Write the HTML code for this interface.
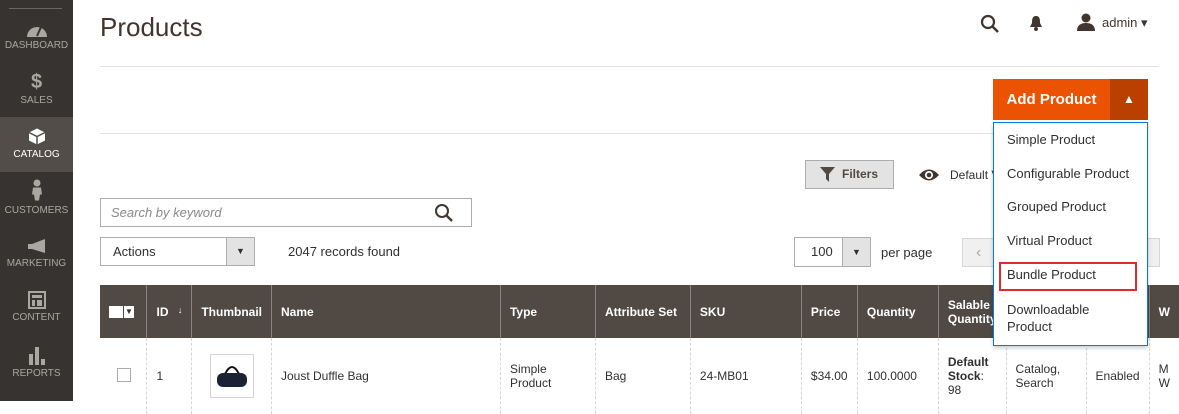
<!DOCTYPE html>
<html><head><style>
*{box-sizing:border-box;margin:0;padding:0}
body{width:1179px;height:401px;overflow:hidden;background:#fff;font-family:"Liberation Sans",sans-serif;color:#303030;position:relative}
.a{position:absolute}
.side{left:0;top:0;width:73px;height:401px;background:#373330}
.ni{position:absolute;left:0;width:73px;text-align:center;color:#aaa6a0;font-size:10px}
.ni svg{display:block;margin:0 auto 3px}
th{background:#514943;color:#fff;font-size:12px;text-align:left;font-weight:bold;padding:0 9px;border-left:1px solid #8a837f;height:53px;white-space:nowrap}
td{font-size:12px;padding:0 9px;border-left:1px dashed #d6d6d6;height:76px;color:#303030}
table{border-collapse:collapse;position:absolute;left:100px;top:285px}
.mi{position:absolute;left:1007px;font-size:13px;color:#303030}
</style></head><body>
<div class="a side">
<div class="a" style="left:9px;top:8px;width:53px;height:1px;background:#6b6661"></div>
<div class="ni" style="top:22px"><svg width="22" height="15" viewBox="0 0 22 15"><path d="M1 15A10 10 0 0 1 21 15Z" fill="#aaa6a0"/><path d="M11 14L15 5" stroke="#373330" stroke-width="2"/></svg>DASHBOARD</div>
<div class="ni" style="top:72px"><div style="font-size:20px;font-weight:bold;line-height:20px">$</div><div style="margin-top:3px">SALES</div></div>
<div class="a" style="left:0;top:117px;width:73px;height:55px;background:#524d49"></div>
<div class="ni" style="top:127px;color:#fff"><svg width="18" height="19" viewBox="0 0 18 18"><path d="M9 1L17 5V13L9 17L1 13V5Z" fill="#fff"/><path d="M1 5L9 9L17 5M9 9V17" stroke="#524d49" stroke-width="1.5" fill="none"/></svg>CATALOG</div>
<div class="ni" style="top:179px"><svg width="12" height="23" viewBox="0 0 12 22"><circle cx="6" cy="3.5" r="3.5" fill="#aaa6a0"/><path d="M2 8H10L11 15H9L8 21H4L3 15H1Z" fill="#aaa6a0"/></svg>CUSTOMERS</div>
<div class="ni" style="top:239px"><svg width="20" height="16" viewBox="0 0 20 16"><path d="M1 5H5L18 0V14L5 10H1Z" fill="#aaa6a0"/></svg>MARKETING</div>
<div class="ni" style="top:291px"><svg width="18" height="18" viewBox="0 0 18 18"><rect x="1" y="1" width="16" height="16" fill="none" stroke="#aaa6a0" stroke-width="2"/><rect x="4" y="4" width="10" height="3" fill="#aaa6a0"/><rect x="4" y="9" width="3" height="6" fill="#aaa6a0"/><rect x="9" y="9" width="5" height="6" fill="#aaa6a0"/></svg>CONTENT</div>
<div class="ni" style="top:346px"><svg width="18" height="19" viewBox="0 0 18 19"><rect x="1" y="8" width="4" height="11" fill="#aaa6a0"/><rect x="7" y="1" width="4" height="18" fill="#aaa6a0"/><rect x="13" y="13" width="4" height="6" fill="#aaa6a0"/></svg>REPORTS</div>
</div>
<div class="a" style="left:100px;top:12px;font-size:26px;color:#41362f">Products</div>
<svg class="a" style="left:980px;top:14px" width="20" height="20" viewBox="0 0 20 20"><circle cx="8" cy="8" r="6" fill="none" stroke="#41362f" stroke-width="2.2"/><path d="M12.5 12.5L18 18" stroke="#41362f" stroke-width="2.5"/></svg>
<svg class="a" style="left:1029px;top:15px" width="14" height="17" viewBox="0 0 14 17"><path d="M7 1C3 1 3 5 3 8L1 12H13L11 8C11 5 11 1 7 1Z" fill="#41362f"/><circle cx="7" cy="14" r="2" fill="#41362f"/></svg>
<svg class="a" style="left:1076px;top:13px" width="20" height="18" viewBox="0 0 20 18"><circle cx="10" cy="5" r="4.5" fill="#41362f"/><path d="M1 18C1 12 5 10 10 10S19 12 19 18Z" fill="#41362f"/></svg>
<div class="a" style="left:1102px;top:15px;font-size:13px;color:#41362f">admin ▾</div>
<div class="a" style="left:100px;top:66px;width:1059px;height:1px;background:#e3e3e3"></div>
<div class="a" style="left:100px;top:133px;width:893px;height:1px;background:#e3e3e3"></div>
<div class="a" style="left:993px;top:79px;width:117px;height:41px;background:#eb5202;color:#fff;font-size:15px;font-weight:bold;line-height:41px;text-align:center">Add Product</div>
<div class="a" style="left:1110px;top:79px;width:38px;height:41px;background:#ba4000;color:#fff;font-size:12px;line-height:41px;text-align:center">▲</div>
<div class="a" style="left:805px;top:160px;width:89px;height:29px;background:#e3e3e3;border:1px solid #adadad;font-size:12px;font-weight:bold;line-height:27px;padding-left:36px;color:#514943">Filters</div>
<svg class="a" style="left:820px;top:167px" width="15" height="15" viewBox="0 0 15 15"><path d="M0 0H15L9 7V15L6 12V7Z" fill="#514943"/></svg>
<svg class="a" style="left:918px;top:168px" width="22" height="14" viewBox="0 0 22 14"><path d="M1 7Q11 -4 21 7Q11 18 1 7Z" fill="#41362f"/><circle cx="11" cy="7" r="4" fill="#fff"/><circle cx="11" cy="7" r="2.3" fill="#41362f"/></svg>
<div class="a" style="left:950px;top:168px;font-size:12px;color:#303030">Default V</div>
<div class="a" style="left:100px;top:198px;width:372px;height:29px;border:1px solid #adadad;font-size:13px;font-style:italic;color:#8a8a8a;line-height:27px;padding-left:10px">Search by keyword</div>
<svg class="a" style="left:434px;top:203px" width="20" height="20" viewBox="0 0 20 20"><circle cx="8" cy="8" r="6" fill="none" stroke="#41362f" stroke-width="2"/><path d="M12.5 12.5L18 18" stroke="#41362f" stroke-width="2.3"/></svg>
<div class="a" style="left:100px;top:237px;width:155px;height:29px;border:1px solid #adadad;font-size:13px;line-height:27px;padding-left:12px">Actions</div>
<div class="a" style="left:226px;top:238px;width:28px;height:27px;background:#e3e3e3;border-left:1px solid #adadad;font-size:9px;text-align:center;line-height:27px">▼</div>
<div class="a" style="left:288px;top:244px;font-size:13px">2047 records found</div>
<div class="a" style="left:794px;top:237px;width:77px;height:30px;border:1px solid #adadad;font-size:13px;line-height:28px;padding-left:16px">100</div>
<div class="a" style="left:842px;top:238px;width:28px;height:28px;background:#e3e3e3;border-left:1px solid #adadad;font-size:9px;text-align:center;line-height:28px">▼</div>
<div class="a" style="left:881px;top:245px;font-size:13px">per page</div>
<div class="a" style="left:962px;top:238px;width:198px;height:29px;background:#f0f0f0;border:1px solid #d6d6d6;color:#aaa;font-size:16px;line-height:27px;padding-left:13px">‹</div>
<table>
<tr><th style="width:47px;border-left:none"><span style="display:inline-block;width:14px;height:12px;background:#fff;vertical-align:middle"></span><span style="display:inline-block;width:10px;height:12px;background:#fff;margin-left:1px;font-size:8px;color:#303030;vertical-align:middle;text-align:center;line-height:12px">▼</span></th>
<th style="width:44px">ID <span style="font-size:9px;margin-left:6px;vertical-align:top">↓</span></th><th style="width:79px">Thumbnail</th><th style="width:229px">Name</th><th style="width:95px">Type</th><th style="width:95px">Attribute Set</th><th style="width:111px">SKU</th><th style="width:56px">Price</th><th style="width:81px">Quantity</th><th style="width:67px;white-space:normal">Salable Quantity</th><th style="width:80px"></th><th style="width:61px"></th><th style="width:20px">W</th></tr>
<tr><td style="border-left:none;padding-left:17px"><span style="display:inline-block;width:14px;height:14px;border:1px solid #adadad;background:#fff"></span></td><td>1</td><td><div style="width:44px;height:44px;border:1px solid #d6d6d6;margin-left:9px;display:flex;align-items:center;justify-content:center"><svg width="34" height="24" viewBox="0 0 34 24"><path d="M10 10Q17 -4 24 10" stroke="#111" stroke-width="2" fill="none"/><rect x="2" y="9" width="30" height="14" rx="6" fill="#1c2233"/></svg></div></td><td>Joust Duffle Bag</td><td>Simple<br>Product</td><td>Bag</td><td>24-MB01</td><td>$34.00</td><td>100.0000</td><td><b>Default<br>Stock</b>:<br>98</td><td>Catalog,<br>Search</td><td>Enabled</td><td>M<br>W</td></tr>
</table>
<div class="a" style="left:993px;top:122px;width:155px;height:224px;background:#fff;border:1px solid #007bdb;box-shadow:0 2px 4px rgba(0,0,0,.2)"></div>
<div class="mi" style="top:132px">Simple Product</div>
<div class="mi" style="top:166px">Configurable Product</div>
<div class="mi" style="top:199px">Grouped Product</div>
<div class="mi" style="top:233px">Virtual Product</div>
<div class="a" style="left:999px;top:262px;width:138px;height:29px;border:2px solid #e02b27"></div>
<div class="mi" style="top:267px">Bundle Product</div>
<div class="mi" style="top:301px;line-height:17px">Downloadable<br>Product</div>
</body></html>
